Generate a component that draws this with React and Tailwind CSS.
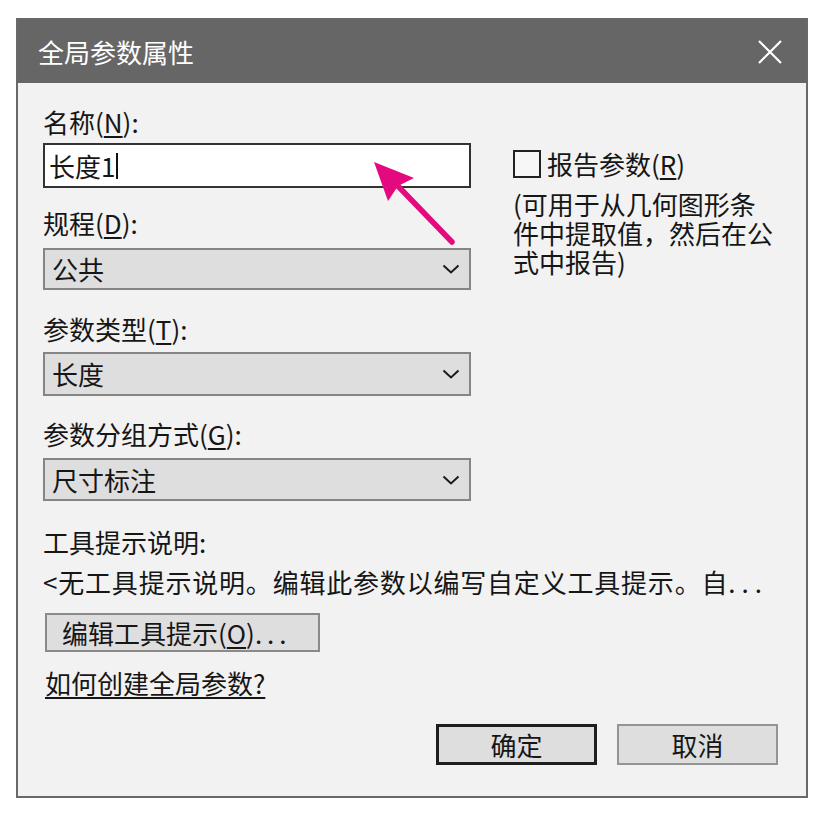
import React from "react";

const U = ({ children }) => <span className="underline underline-offset-[3px]">{children}</span>;

const Chevron = () => (
  <svg width="18" height="10" viewBox="0 0 18 10" className="shrink-0">
    <path d="M1.5 1.5 L9 8.5 L16.5 1.5" fill="none" stroke="#1a1a1a" strokeWidth="2" />
  </svg>
);

const Select = ({ value, h }) => (
  <div className={`flex items-center justify-between w-[428px] ${h} bg-[#dedede] border-2 border-[#858585] pl-[7px] pr-[9px]`}>
    <span className="leading-[34px]">{value}</span>
    <Chevron />
  </div>
);

export default function App() {
  return (
    <div className="w-[820px] h-[824px] bg-white pt-[18px] pl-[16px] font-['Noto_Sans_CJK_SC','Noto_Sans',sans-serif] text-[26px] text-[#161616]">
      <div className="relative w-[792px] h-[780px] border-2 border-[#696969] flex flex-col bg-[#f2f2f2]">
        {/* title bar */}
        <div className="h-[63px] bg-[#666666] flex items-center justify-between pl-[20px] pr-[14px] text-white">
          <span className="leading-[34px]">全局参数属性</span>
          <svg width="24" height="24" viewBox="0 0 24 24" className="mr-[10px]">
            <path d="M1 1 L23 23 M23 1 L1 23" stroke="#ffffff" strokeWidth="2.2" fill="none" />
          </svg>
        </div>

        {/* body */}
        <div className="flex-1 flex flex-col pl-[25px] pr-[28px]">
          <div className="flex gap-[42px]">
            {/* left column */}
            <div className="flex flex-col w-[428px] pt-[22px]">
              <div className="leading-[34px]">名称(<U>N</U>):</div>
              <div className="mt-[4px] h-[45px] bg-white border-2 border-[#333333] flex items-center pl-[4px]">
                <span className="leading-[34px]">长度1</span>
                <span className="w-[2px] h-[26px] bg-[#111] ml-[1px]"></span>
              </div>
              <div className="mt-[18px] leading-[34px]">规程(<U>D</U>):</div>
              <div className="mt-[8px]"><Select value="公共" h="h-[42px]" /></div>
              <div className="mt-[22px] leading-[34px]">参数类型(<U>T</U>):</div>
              <div className="mt-[6px]"><Select value="长度" h="h-[44px]" /></div>
              <div className="mt-[21px] leading-[34px]">参数分组方式(<U>G</U>):</div>
              <div className="mt-[7px]"><Select value="尺寸标注" h="h-[43px]" /></div>
            </div>

            {/* right column */}
            <div className="flex flex-col pt-[64px]">
              <div className="flex items-center">
                <div className="w-[28px] h-[28px] border-2 border-[#222222] bg-[#f7f7f7]"></div>
                <span className="ml-[6px] leading-[34px]">报告参数(<U>R</U>)</span>
              </div>
              <div className="mt-[8px] leading-[29px]">
                <div>(可用于从几何图形条</div>
                <div>件中提取值，然后在公</div>
                <div>式中报告)</div>
              </div>
            </div>
          </div>

          <div className="mt-[24px] leading-[34px]">工具提示说明:</div>
          <div className="mt-[6px] leading-[34px] whitespace-nowrap tracking-[0.8px]">
            &lt;无工具提示说明。编辑此参数以编写自定义工具提示。自<span className="tracking-[6px]">...</span>
          </div>
          <div className="mt-[14px] w-[275px] h-[39px] ml-[2px] bg-[#dedede] border-2 border-[#8a8a8a] flex items-center pl-[15px]">
            <span className="leading-[34px] whitespace-nowrap">编辑工具提示(<U>O</U>)<span className="tracking-[5px]">...</span></span>
          </div>
          <div className="mt-[14px] ml-[2px] leading-[34px] underline underline-offset-[3px] w-fit">如何创建全局参数?</div>

          <div className="mt-[24px] flex justify-end gap-[20px]">
            <div className="w-[161px] h-[41px] bg-[#dedede] border-[3px] border-[#1e1e1e] flex items-center justify-center">
              <span className="leading-[34px]">确定</span>
            </div>
            <div className="w-[161px] h-[41px] bg-[#dedede] border-2 border-[#949494] flex items-center justify-center">
              <span className="leading-[34px]">取消</span>
            </div>
          </div>
        </div>

        {/* annotation arrow */}
        <svg className="absolute left-0 top-0 pointer-events-none" width="792" height="780" viewBox="0 0 792 780">
          <g transform="translate(-18,-20)">
            <line x1="452" y1="242" x2="396" y2="184" stroke="#e5097f" strokeWidth="5.5" strokeLinecap="round" />
            <polygon points="374,162 414,178 398,186 388,201" fill="#e5097f" />
          </g>
        </svg>
      </div>
    </div>
  );
}
